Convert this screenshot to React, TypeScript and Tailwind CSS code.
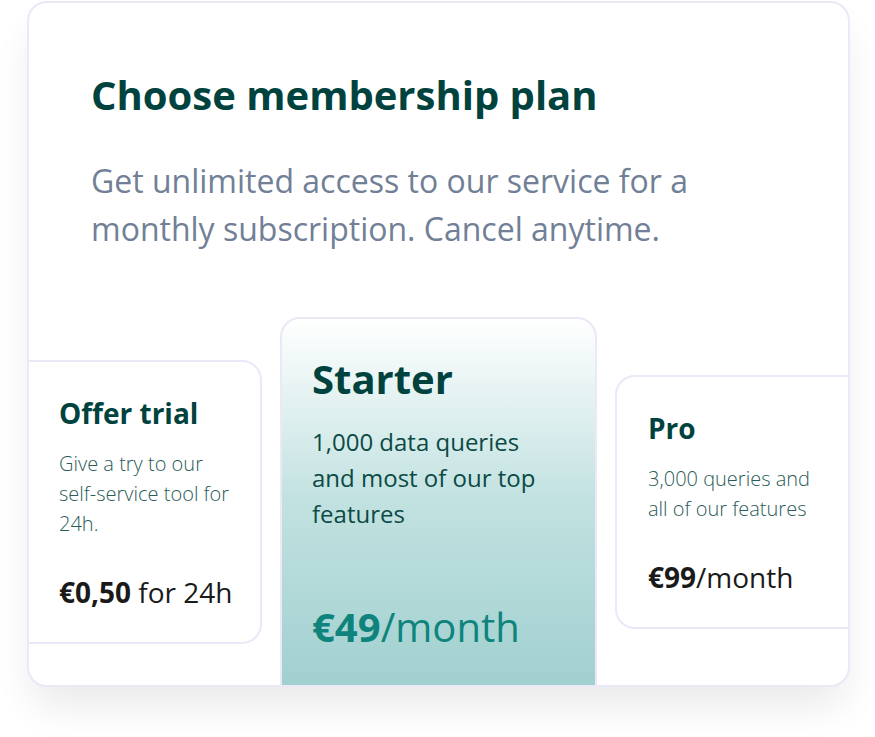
export default function App() {
  return (
    <div className="min-h-screen bg-white pt-[1px] pl-[27px]" style={{ fontFamily: '"Open Sans", "Liberation Sans", sans-serif' }}>
      <div className="w-[823px] h-[686px] rounded-[20px] border-2 border-[#ebe8f8] bg-white overflow-hidden shadow-[0_24px_40px_-6px_rgba(0,0,0,0.09)]">
        {/* Header */}
        <div className="pl-[62px] pt-[68px]">
          <h1 className="text-[40px] leading-[48px] font-bold text-[#00433e]">Choose membership plan</h1>
          <p className="mt-[38px] max-w-[640px] text-[32px] leading-[48px] text-[#718096]">
            Get unlimited access to our service for a monthly subscription. Cancel anytime.
          </p>
        </div>

        {/* Plans */}
        <div className="mt-[64px] ml-[-22px] flex items-start gap-[18px]">
          <div className="mt-[43px] w-[255px] shrink-0 rounded-[20px] border-2 border-[#ebe8f8] bg-white pl-[50px] pt-[34px] pb-[33px]">
            <h2 className="text-[28px] leading-[34px] font-bold text-[#00433e]">Offer trial</h2>
            <p className="mt-[19px] max-w-[180px] text-[20px] leading-[30px] font-light text-[#2a5c58]">
              Give a try to our self-service tool for 24h.
            </p>
            <p className="mt-[36px] text-[28px] leading-[34px] text-[#1a1a1a]">
              <span className="font-bold">€0,50</span> for 24h
            </p>
          </div>

          <div className="w-[317px] h-[400px] shrink-0 rounded-[20px] border-2 border-[#ebe8f8] bg-gradient-to-b from-white via-[#c2e2e1] via-45% to-[#9ccdcd] pl-[30px] pt-[36px]">
            <h2 className="text-[40px] leading-[48px] font-bold text-[#00433e]">Starter</h2>
            <p className="mt-[21px] max-w-[235px] text-[24px] leading-[36px] text-[#0b4a45]">
              1,000 data queries and most of our top features
            </p>
            <p className="mt-[71px] text-[40px] leading-[48px] text-[#0e847c]">
              <span className="font-bold">€49</span>/month
            </p>
          </div>

          <div className="mt-[58px] w-[260px] shrink-0 rounded-[20px] border-2 border-[#ebe8f8] bg-white pl-[31px] pt-[34px] pb-[33px]">
            <h2 className="text-[28px] leading-[34px] font-bold text-[#00433e]">Pro</h2>
            <p className="mt-[19px] max-w-[180px] text-[20px] leading-[30px] font-light text-[#2a5c58]">
              3,000 queries and all of our features
            </p>
            <p className="mt-[36px] text-[28px] leading-[34px] text-[#1a1a1a]">
              <span className="font-bold">€99</span>/month
            </p>
          </div>
        </div>
      </div>
    </div>
  );
}
